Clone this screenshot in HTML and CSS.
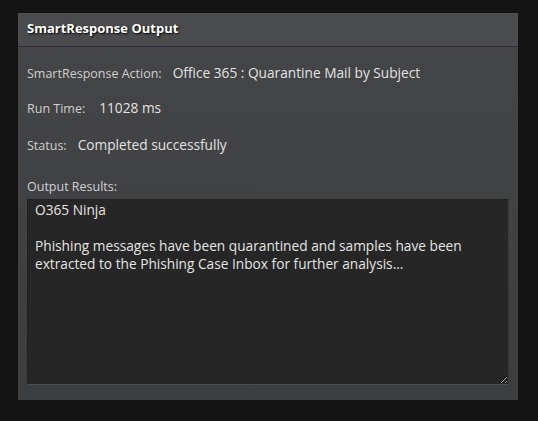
FILE: index.html
```html
<!DOCTYPE html>
<html>
<head>
<meta charset="utf-8">
<link rel="stylesheet" href="styles.css">
</head>
<body>
<div class="panel">
  <div class="panel-header">SmartResponse Output</div>
  <div class="panel-body">
    <div class="row row-action"><span class="label">SmartResponse Action:</span><span class="value">Office 365 : Quarantine Mail by Subject</span></div>
    <div class="row row-time"><span class="label">Run Time:</span><span class="value">11028 ms</span></div>
    <div class="row row-status"><span class="label">Status:</span><span class="value">Completed successfully</span></div>
    <div class="results-label">Output Results:</div>
    <textarea class="results" readonly>O365 Ninja

Phishing messages have been quarantined and samples have been extracted to the Phishing Case Inbox for further analysis...</textarea>
  </div>
</div>
</body>
</html>
```
FILE: styles.css
```css
html, body {
  margin: 0;
  padding: 0;
  background: #131313;
  height: 100%;
}
body {
  font-family: "Open Sans", "DejaVu Sans", sans-serif;
  padding: 13px 20px 0 18px;
  box-sizing: border-box;
}
.panel {
  width: 500px;
  background: #424345;
}
.panel-header {
  height: 33px;
  background: #4a4b4d;
  border-bottom: 1px solid #33283a;
  color: #ffffff;
  font-weight: bold;
  font-size: 13px;
  line-height: 31px;
  padding-left: 9px;
  text-shadow: 1px 1px 2px #000;
}
.panel-body {
  background: linear-gradient(#444547, #3c3d3f);
  padding: 16px 8px 15px 9px;
}
.row {
  display: flex;
  align-items: baseline;
  height: 20px;
  line-height: 20px;
}
.row-time { margin-top: 15px; }
.row-status { margin-top: 17px; }
.label {
  font-size: 12.5px;
  color: #cfcfcf;
  margin-right: 11px;
}
.row-time .label { margin-right: 14px; }
.value {
  font-size: 13.7px;
  color: #e2e2e2;
}
.results-label {
  margin-top: 24px;
  font-size: 12.5px;
  line-height: 16px;
  color: #cfcfcf;
}
.results {
  display: block;
  box-sizing: border-box;
  width: 482px;
  height: 186px;
  margin-top: 4px;
  background: #262626;
  border: 1px solid #1f1f1f;
  border-bottom-color: #4a4b4d;
  border-right-color: #3a3a3a;
  color: #e4e4e4;
  font-family: "Open Sans", "DejaVu Sans", sans-serif;
  font-size: 13.7px;
  line-height: 18px;
  padding: 1px 7px;
  outline: none;
  resize: both;
}
```
